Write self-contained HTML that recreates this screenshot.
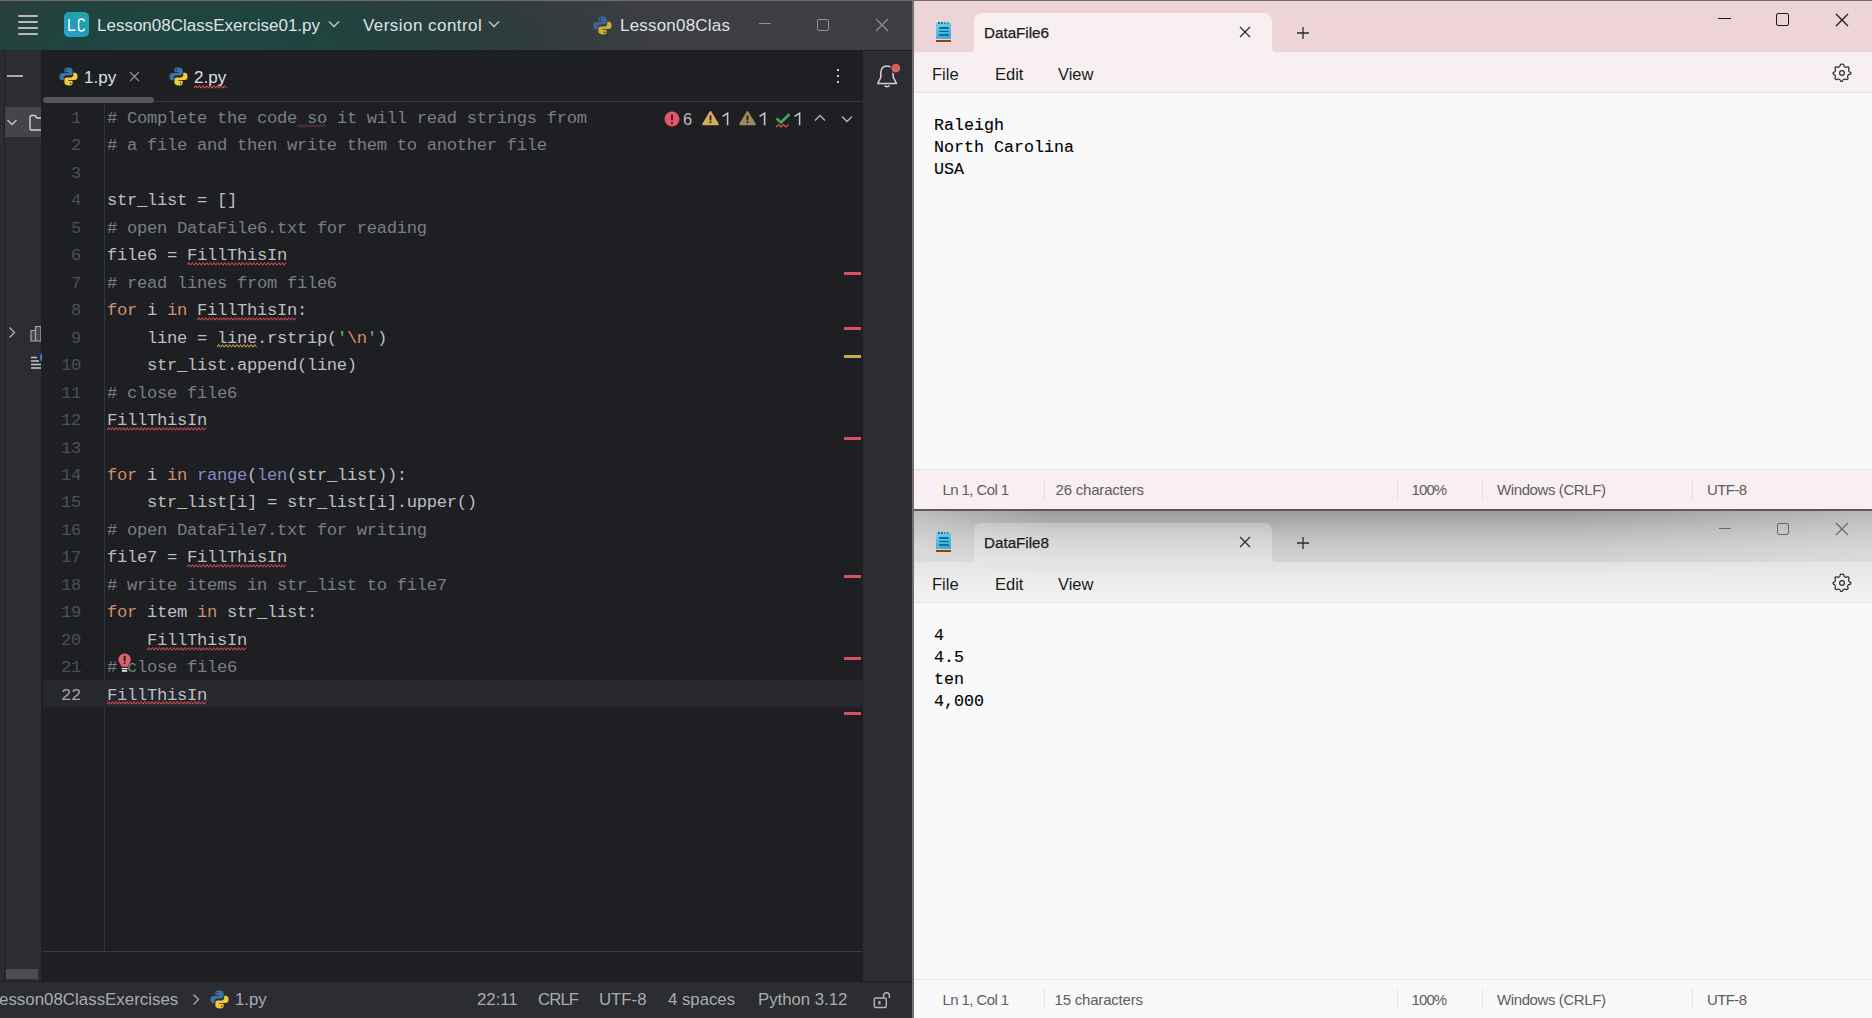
<!DOCTYPE html>
<html><head><meta charset="utf-8">
<style>
*{margin:0;padding:0;box-sizing:border-box}
html,body{width:1872px;height:1018px;overflow:hidden;background:#1e1f22;font-family:"Liberation Sans",sans-serif}
.a{position:absolute;display:block}
.t{position:absolute;white-space:pre;line-height:1}
#ide{position:absolute;left:0;top:0;width:912px;height:1018px;background:#1e1f22;overflow:hidden}
#title{position:absolute;left:0;top:0;width:912px;height:50px;background:radial-gradient(ellipse 460px 120px at 190px 45px,#1e4742 0%,#20443f 30%,#283f3e 55%,#323b3d 78%,rgba(60,62,65,0) 100%),#3c3e41}
.ln{position:absolute;left:43px;width:38px;text-align:right;color:#4b5059;font-family:"Liberation Mono",monospace;font-size:17.2px;letter-spacing:-0.320px;line-height:1;white-space:pre}
.cl{position:absolute;left:107px;color:#bcbec4;font-family:"Liberation Mono",monospace;font-size:17.2px;letter-spacing:-0.320px;white-space:pre;line-height:1}
.c{color:#7a7e85}.k{color:#cf8e6d}.s{color:#6aab73}.sx{color:#cf8e6d}.b{color:#8888c6}
.ist{color:#bcbec4;font-size:17px}
.np{position:absolute;left:914px;width:958px;overflow:hidden}
.npm{font-size:16.5px;color:#1b1b1b}
.npt{font-family:"Liberation Mono",monospace;font-size:16.67px;color:#000;line-height:22px;white-space:pre;-webkit-text-stroke:0.12px #000}
.nps{font-size:15px;color:#5d5d5d}
</style></head><body>
<div id="ide">
  <div id="title"></div>
  <div class="a" style="left:0;top:0;width:912px;height:1px;background:#6e6e6e"></div>
  <!-- hamburger -->
  <div class="a" style="left:18px;top:14.8px;width:20px;height:2px;background:#b8babe;border-radius:1px"></div>
  <div class="a" style="left:18px;top:20.8px;width:20px;height:2px;background:#b8babe;border-radius:1px"></div>
  <div class="a" style="left:18px;top:26.8px;width:20px;height:2px;background:#b8babe;border-radius:1px"></div>
  <div class="a" style="left:18px;top:32.8px;width:20px;height:2px;background:#b8babe;border-radius:1px"></div>
  <!-- LC badge -->
  <div class="a" style="left:64px;top:12px;width:25px;height:25px;border-radius:5px;background:linear-gradient(45deg,#2ca7dc 0%,#239cb4 50%,#22aa98 100%)"></div>
  <svg class="a" style="left:64px;top:12px" width="25" height="25"><path d="M5.1 7V18.2H11.5" fill="none" stroke="#fff" stroke-width="1.5"/><path d="M20.4 9.3Q20.1 7 17.4 7Q14.6 7 14.6 10V16Q14.6 19 17.4 19Q20.1 19 20.4 16.7" fill="none" stroke="#fff" stroke-width="1.5"/></svg>
  <div class="t" style="left:97px;top:16.5px;font-size:17px;color:#dfe1e5">Lesson08ClassExercise01.py</div>
  <svg class="a" style="left:328px;top:20px" width="12" height="8"><path d="M1 1.5L6 6.5L11 1.5" fill="none" stroke="#c9cbcf" stroke-width="1.3"/></svg>
  <div class="t" style="left:363px;top:16.5px;font-size:17px;letter-spacing:0.45px;color:#dfe1e5">Version control</div>
  <svg class="a" style="left:488px;top:20px" width="12" height="8"><path d="M1 1.5L6 6.5L11 1.5" fill="none" stroke="#c9cbcf" stroke-width="1.3"/></svg>
  <div class="a" style="left:0;top:0;opacity:0.8"><svg class="a" style="left:593px;top:16px" width="19" height="19" viewBox="0 0 19 19">
<path fill="#3a73a8" d="M9.2 0.6C5.6 0.6 5.4 2 5.4 3.3V5.2H9.6V6H3.3C1.6 6 0.4 7.3 0.4 9.6C0.4 12 1.5 13.2 3.1 13.2H4.8V10.9C4.8 9.5 6 8.4 7.4 8.4H11.4C12.7 8.4 13.6 7.5 13.6 6.2V3.3C13.6 1.9 12.3 0.6 9.2 0.6Z"/>
<circle cx="7.4" cy="2.8" r="0.75" fill="#1e1f22"/>
<path fill="#f0c93c" d="M9.8 18.4C13.4 18.4 13.6 17 13.6 15.7V13.8H9.4V13H15.7C17.4 13 18.6 11.7 18.6 9.4C18.6 7 17.5 5.8 15.9 5.8H14.2V8.1C14.2 9.5 13 10.6 11.6 10.6H7.6C6.3 10.6 5.4 11.5 5.4 12.8V15.7C5.4 17.1 6.7 18.4 9.8 18.4Z"/>
<circle cx="11.6" cy="16.2" r="0.75" fill="#1e1f22"/>
</svg></div>
  <div class="t" style="left:620px;top:16.5px;font-size:17px;letter-spacing:0.2px;color:#dfe1e5">Lesson08Clas</div>
  <div class="a" style="left:759px;top:23px;width:12px;height:1.2px;background:#8e9094"></div>
  <div class="a" style="left:817px;top:19px;width:12px;height:12px;border:1.2px solid #8e9094;border-radius:2px"></div>
  <svg class="a" style="left:875px;top:18px" width="14" height="14"><path d="M1 1L13 13M13 1L1 13" stroke="#8e9094" stroke-width="1.2"/></svg>

  <!-- left tool strip -->
  <div class="a" style="left:0;top:50px;width:42px;height:931px;background:#2b2d30"></div>
  <div class="a" style="left:4px;top:50px;width:1px;height:931px;background:#1e1f22"></div>
  <div class="a" style="left:41px;top:50px;width:2px;height:931px;background:#1e1f22"></div>
  <div class="a" style="left:7px;top:75px;width:16px;height:2px;background:#a8aaae"></div>
  <div class="a" style="left:5px;top:107px;width:36px;height:30px;background:#43454a"></div>
  <svg class="a" style="left:6px;top:118px" width="12" height="9"><path d="M1.5 2L6 6.5L10.5 2" fill="none" stroke="#c9cbcf" stroke-width="1.3"/></svg>
  <svg class="a" style="left:29px;top:114px" width="12" height="17"><path d="M12 4H8L6 1.5H2.5Q1 1.5 1 3V14.5Q1 16 2.5 16H12" fill="none" stroke="#d2d4d8" stroke-width="1.4"/></svg>
  <svg class="a" style="left:8px;top:326px" width="8" height="13"><path d="M1.5 1.5L6.5 6.5L1.5 11.5" fill="none" stroke="#b4b6ba" stroke-width="1.3"/></svg>
  <svg class="a" style="left:30px;top:325px" width="11" height="17"><path d="M1 5.5H5.5V16H1Z M5.5 1.5H11V16H5.5Z" fill="#45474c" stroke="#a8aaae" stroke-width="1.2"/></svg>
  <svg class="a" style="left:30px;top:353px" width="12" height="17"><path d="M1 4.5H7M1 8H9M1 11.5H11M1 15H11" stroke="#c4c6ca" stroke-width="1.4"/><path d="M12 1Q9.5 4.5 12 8" fill="#3d7cf0" stroke="#3d7cf0" stroke-width="1.5"/></svg>
  <div class="a" style="left:6px;top:969px;width:32px;height:10px;background:#4a4c50"></div>

  <!-- right strip -->
  <div class="a" style="left:863px;top:51px;width:49px;height:930px;background:#2b2d30"></div>
  <div class="a" style="left:836.5px;top:68.5px;width:2.6px;height:2.6px;background:#d9dbdf;border-radius:0.5px"></div>
  <div class="a" style="left:836.5px;top:74.7px;width:2.6px;height:2.6px;background:#d9dbdf;border-radius:0.5px"></div>
  <div class="a" style="left:836.5px;top:80.9px;width:2.6px;height:2.6px;background:#d9dbdf;border-radius:0.5px"></div>
  <svg class="a" style="left:876px;top:63px" width="24" height="26"><path d="M1.8 20.5H20.5L17.2 14.2V9.8Q17 3 11 3Q5 3 4.8 9.8V14.2Z" fill="none" stroke="#d2d4d8" stroke-width="1.5" stroke-linejoin="round"/><path d="M8.5 22.5Q11 25 13.5 22.5" fill="none" stroke="#d2d4d8" stroke-width="1.5"/><circle cx="19.8" cy="5.1" r="5.6" fill="#2b2d30"/><circle cx="19.8" cy="5.1" r="4.4" fill="#db5c5c"/></svg>

  <!-- tab row -->
  <svg class="a" style="left:59px;top:67px" width="19" height="19" viewBox="0 0 19 19">
<path fill="#3a73a8" d="M9.2 0.6C5.6 0.6 5.4 2 5.4 3.3V5.2H9.6V6H3.3C1.6 6 0.4 7.3 0.4 9.6C0.4 12 1.5 13.2 3.1 13.2H4.8V10.9C4.8 9.5 6 8.4 7.4 8.4H11.4C12.7 8.4 13.6 7.5 13.6 6.2V3.3C13.6 1.9 12.3 0.6 9.2 0.6Z"/>
<circle cx="7.4" cy="2.8" r="0.75" fill="#1e1f22"/>
<path fill="#f0c93c" d="M9.8 18.4C13.4 18.4 13.6 17 13.6 15.7V13.8H9.4V13H15.7C17.4 13 18.6 11.7 18.6 9.4C18.6 7 17.5 5.8 15.9 5.8H14.2V8.1C14.2 9.5 13 10.6 11.6 10.6H7.6C6.3 10.6 5.4 11.5 5.4 12.8V15.7C5.4 17.1 6.7 18.4 9.8 18.4Z"/>
<circle cx="11.6" cy="16.2" r="0.75" fill="#1e1f22"/>
</svg>
  <div class="t" style="left:84px;top:69px;font-size:17px;color:#dfe1e5">1.py</div>
  <svg class="a" style="left:129px;top:71px" width="11" height="11"><path d="M1 1L10 10M10 1L1 10" stroke="#8c8f94" stroke-width="1.2"/></svg>
  <svg class="a" style="left:169px;top:67px" width="19" height="19" viewBox="0 0 19 19">
<path fill="#3a73a8" d="M9.2 0.6C5.6 0.6 5.4 2 5.4 3.3V5.2H9.6V6H3.3C1.6 6 0.4 7.3 0.4 9.6C0.4 12 1.5 13.2 3.1 13.2H4.8V10.9C4.8 9.5 6 8.4 7.4 8.4H11.4C12.7 8.4 13.6 7.5 13.6 6.2V3.3C13.6 1.9 12.3 0.6 9.2 0.6Z"/>
<circle cx="7.4" cy="2.8" r="0.75" fill="#1e1f22"/>
<path fill="#f0c93c" d="M9.8 18.4C13.4 18.4 13.6 17 13.6 15.7V13.8H9.4V13H15.7C17.4 13 18.6 11.7 18.6 9.4C18.6 7 17.5 5.8 15.9 5.8H14.2V8.1C14.2 9.5 13 10.6 11.6 10.6H7.6C6.3 10.6 5.4 11.5 5.4 12.8V15.7C5.4 17.1 6.7 18.4 9.8 18.4Z"/>
<circle cx="11.6" cy="16.2" r="0.75" fill="#1e1f22"/>
</svg>
  <div class="t" style="left:194px;top:69px;font-size:17px;color:#dfe1e5">2.py</div>
  <svg class="a" style="left:194px;top:85px" width="33" height="4"><path d="M0 3.2 L1.80 0.60 L3.60 3.20 L5.40 0.60 L7.20 3.20 L9.00 0.60 L10.80 3.20 L12.60 0.60 L14.40 3.20 L16.20 0.60 L18.00 3.20 L19.80 0.60 L21.60 3.20 L23.40 0.60 L25.20 3.20 L27.00 0.60 L28.80 3.20 L30.60 0.60 L32.40 3.20" fill="none" stroke="#f75464" stroke-width="1"/></svg>
  <div class="a" style="left:43px;top:97px;width:111px;height:6px;background:#55575c;border-radius:3px"></div>
  <div class="a" style="left:154px;top:101px;width:708px;height:1px;background:#393b40"></div>

  <!-- gutter separator & bottom line -->
  <div class="a" style="left:104px;top:102px;width:1px;height:849px;background:#313438"></div>
  <div class="a" style="left:43px;top:951px;width:819px;height:1px;background:#393b40"></div>
  <!-- current line -->
  <div class="a" style="left:43px;top:680px;width:819px;height:27px;background:#26282e"></div>

<div class="ln" style="top:109.82px;color:#4b5059">1</div>
<div class="cl" style="top:109.82px"><span class="c"># Complete the code </span><span class="c">so</span><span class="c"> it will read strings from</span></div>
<svg class="a" style="left:297.0px;top:124px" width="30" height="4"><path d="M0 3.2 L1.80 0.60 L3.60 3.20 L5.40 0.60 L7.20 3.20 L9.00 0.60 L10.80 3.20 L12.60 0.60 L14.40 3.20 L16.20 0.60 L18.00 3.20 L19.80 0.60 L21.60 3.20 L23.40 0.60 L25.20 3.20 L27.00 0.60 L28.80 3.20" fill="none" stroke="#6e3a42" stroke-width="1"/></svg>
<div class="ln" style="top:137.30px;color:#4b5059">2</div>
<div class="cl" style="top:137.30px"><span class="c"># a file and then write them to another file</span></div>
<div class="ln" style="top:164.78px;color:#4b5059">3</div>
<div class="cl" style="top:164.78px"></div>
<div class="ln" style="top:192.25px;color:#4b5059">4</div>
<div class="cl" style="top:192.25px">str_list = []</div>
<div class="ln" style="top:219.73px;color:#4b5059">5</div>
<div class="cl" style="top:219.73px"><span class="c"># open DataFile6.txt for reading</span></div>
<div class="ln" style="top:247.20px;color:#4b5059">6</div>
<div class="cl" style="top:247.20px">file6 = FillThisIn</div>
<svg class="a" style="left:187.0px;top:262px" width="100" height="4"><path d="M0 3.2 L1.80 0.60 L3.60 3.20 L5.40 0.60 L7.20 3.20 L9.00 0.60 L10.80 3.20 L12.60 0.60 L14.40 3.20 L16.20 0.60 L18.00 3.20 L19.80 0.60 L21.60 3.20 L23.40 0.60 L25.20 3.20 L27.00 0.60 L28.80 3.20 L30.60 0.60 L32.40 3.20 L34.20 0.60 L36.00 3.20 L37.80 0.60 L39.60 3.20 L41.40 0.60 L43.20 3.20 L45.00 0.60 L46.80 3.20 L48.60 0.60 L50.40 3.20 L52.20 0.60 L54.00 3.20 L55.80 0.60 L57.60 3.20 L59.40 0.60 L61.20 3.20 L63.00 0.60 L64.80 3.20 L66.60 0.60 L68.40 3.20 L70.20 0.60 L72.00 3.20 L73.80 0.60 L75.60 3.20 L77.40 0.60 L79.20 3.20 L81.00 0.60 L82.80 3.20 L84.60 0.60 L86.40 3.20 L88.20 0.60 L90.00 3.20 L91.80 0.60 L93.60 3.20 L95.40 0.60 L97.20 3.20 L99.00 0.60" fill="none" stroke="#e0505e" stroke-width="1"/></svg>
<div class="ln" style="top:274.68px;color:#4b5059">7</div>
<div class="cl" style="top:274.68px"><span class="c"># read lines from file6</span></div>
<div class="ln" style="top:302.16px;color:#4b5059">8</div>
<div class="cl" style="top:302.16px"><span class="k">for</span> i <span class="k">in</span> FillThisIn:</div>
<svg class="a" style="left:197.0px;top:317px" width="100" height="4"><path d="M0 3.2 L1.80 0.60 L3.60 3.20 L5.40 0.60 L7.20 3.20 L9.00 0.60 L10.80 3.20 L12.60 0.60 L14.40 3.20 L16.20 0.60 L18.00 3.20 L19.80 0.60 L21.60 3.20 L23.40 0.60 L25.20 3.20 L27.00 0.60 L28.80 3.20 L30.60 0.60 L32.40 3.20 L34.20 0.60 L36.00 3.20 L37.80 0.60 L39.60 3.20 L41.40 0.60 L43.20 3.20 L45.00 0.60 L46.80 3.20 L48.60 0.60 L50.40 3.20 L52.20 0.60 L54.00 3.20 L55.80 0.60 L57.60 3.20 L59.40 0.60 L61.20 3.20 L63.00 0.60 L64.80 3.20 L66.60 0.60 L68.40 3.20 L70.20 0.60 L72.00 3.20 L73.80 0.60 L75.60 3.20 L77.40 0.60 L79.20 3.20 L81.00 0.60 L82.80 3.20 L84.60 0.60 L86.40 3.20 L88.20 0.60 L90.00 3.20 L91.80 0.60 L93.60 3.20 L95.40 0.60 L97.20 3.20 L99.00 0.60" fill="none" stroke="#e0505e" stroke-width="1"/></svg>
<div class="ln" style="top:329.63px;color:#4b5059">9</div>
<div class="cl" style="top:329.63px">    line = line.rstrip(<span class="s">'</span><span class="sx">\n</span><span class="s">'</span>)</div>
<svg class="a" style="left:217.0px;top:344px" width="40" height="4"><path d="M0 3.2 L1.80 0.60 L3.60 3.20 L5.40 0.60 L7.20 3.20 L9.00 0.60 L10.80 3.20 L12.60 0.60 L14.40 3.20 L16.20 0.60 L18.00 3.20 L19.80 0.60 L21.60 3.20 L23.40 0.60 L25.20 3.20 L27.00 0.60 L28.80 3.20 L30.60 0.60 L32.40 3.20 L34.20 0.60 L36.00 3.20 L37.80 0.60 L39.60 3.20" fill="none" stroke="#d5b64a" stroke-width="1"/></svg>
<div class="ln" style="top:357.11px;color:#4b5059">10</div>
<div class="cl" style="top:357.11px">    str_list.append(line)</div>
<div class="ln" style="top:384.58px;color:#4b5059">11</div>
<div class="cl" style="top:384.58px"><span class="c"># close file6</span></div>
<div class="ln" style="top:412.06px;color:#4b5059">12</div>
<div class="cl" style="top:412.06px">FillThisIn</div>
<svg class="a" style="left:107.0px;top:427px" width="100" height="4"><path d="M0 3.2 L1.80 0.60 L3.60 3.20 L5.40 0.60 L7.20 3.20 L9.00 0.60 L10.80 3.20 L12.60 0.60 L14.40 3.20 L16.20 0.60 L18.00 3.20 L19.80 0.60 L21.60 3.20 L23.40 0.60 L25.20 3.20 L27.00 0.60 L28.80 3.20 L30.60 0.60 L32.40 3.20 L34.20 0.60 L36.00 3.20 L37.80 0.60 L39.60 3.20 L41.40 0.60 L43.20 3.20 L45.00 0.60 L46.80 3.20 L48.60 0.60 L50.40 3.20 L52.20 0.60 L54.00 3.20 L55.80 0.60 L57.60 3.20 L59.40 0.60 L61.20 3.20 L63.00 0.60 L64.80 3.20 L66.60 0.60 L68.40 3.20 L70.20 0.60 L72.00 3.20 L73.80 0.60 L75.60 3.20 L77.40 0.60 L79.20 3.20 L81.00 0.60 L82.80 3.20 L84.60 0.60 L86.40 3.20 L88.20 0.60 L90.00 3.20 L91.80 0.60 L93.60 3.20 L95.40 0.60 L97.20 3.20 L99.00 0.60" fill="none" stroke="#e0505e" stroke-width="1"/></svg>
<div class="ln" style="top:439.54px;color:#4b5059">13</div>
<div class="cl" style="top:439.54px"></div>
<div class="ln" style="top:467.01px;color:#4b5059">14</div>
<div class="cl" style="top:467.01px"><span class="k">for</span> i <span class="k">in</span> <span class="b">range</span>(<span class="b">len</span>(str_list)):</div>
<div class="ln" style="top:494.49px;color:#4b5059">15</div>
<div class="cl" style="top:494.49px">    str_list[i] = str_list[i].upper()</div>
<div class="ln" style="top:521.96px;color:#4b5059">16</div>
<div class="cl" style="top:521.96px"><span class="c"># open DataFile7.txt for writing</span></div>
<div class="ln" style="top:549.44px;color:#4b5059">17</div>
<div class="cl" style="top:549.44px">file7 = FillThisIn</div>
<svg class="a" style="left:187.0px;top:564px" width="100" height="4"><path d="M0 3.2 L1.80 0.60 L3.60 3.20 L5.40 0.60 L7.20 3.20 L9.00 0.60 L10.80 3.20 L12.60 0.60 L14.40 3.20 L16.20 0.60 L18.00 3.20 L19.80 0.60 L21.60 3.20 L23.40 0.60 L25.20 3.20 L27.00 0.60 L28.80 3.20 L30.60 0.60 L32.40 3.20 L34.20 0.60 L36.00 3.20 L37.80 0.60 L39.60 3.20 L41.40 0.60 L43.20 3.20 L45.00 0.60 L46.80 3.20 L48.60 0.60 L50.40 3.20 L52.20 0.60 L54.00 3.20 L55.80 0.60 L57.60 3.20 L59.40 0.60 L61.20 3.20 L63.00 0.60 L64.80 3.20 L66.60 0.60 L68.40 3.20 L70.20 0.60 L72.00 3.20 L73.80 0.60 L75.60 3.20 L77.40 0.60 L79.20 3.20 L81.00 0.60 L82.80 3.20 L84.60 0.60 L86.40 3.20 L88.20 0.60 L90.00 3.20 L91.80 0.60 L93.60 3.20 L95.40 0.60 L97.20 3.20 L99.00 0.60" fill="none" stroke="#e0505e" stroke-width="1"/></svg>
<div class="ln" style="top:576.92px;color:#4b5059">18</div>
<div class="cl" style="top:576.92px"><span class="c"># write items in str_list to file7</span></div>
<div class="ln" style="top:604.39px;color:#4b5059">19</div>
<div class="cl" style="top:604.39px"><span class="k">for</span> item <span class="k">in</span> str_list:</div>
<div class="ln" style="top:631.87px;color:#4b5059">20</div>
<div class="cl" style="top:631.87px">    FillThisIn</div>
<svg class="a" style="left:147.0px;top:647px" width="100" height="4"><path d="M0 3.2 L1.80 0.60 L3.60 3.20 L5.40 0.60 L7.20 3.20 L9.00 0.60 L10.80 3.20 L12.60 0.60 L14.40 3.20 L16.20 0.60 L18.00 3.20 L19.80 0.60 L21.60 3.20 L23.40 0.60 L25.20 3.20 L27.00 0.60 L28.80 3.20 L30.60 0.60 L32.40 3.20 L34.20 0.60 L36.00 3.20 L37.80 0.60 L39.60 3.20 L41.40 0.60 L43.20 3.20 L45.00 0.60 L46.80 3.20 L48.60 0.60 L50.40 3.20 L52.20 0.60 L54.00 3.20 L55.80 0.60 L57.60 3.20 L59.40 0.60 L61.20 3.20 L63.00 0.60 L64.80 3.20 L66.60 0.60 L68.40 3.20 L70.20 0.60 L72.00 3.20 L73.80 0.60 L75.60 3.20 L77.40 0.60 L79.20 3.20 L81.00 0.60 L82.80 3.20 L84.60 0.60 L86.40 3.20 L88.20 0.60 L90.00 3.20 L91.80 0.60 L93.60 3.20 L95.40 0.60 L97.20 3.20 L99.00 0.60" fill="none" stroke="#e0505e" stroke-width="1"/></svg>
<div class="ln" style="top:659.34px;color:#4b5059">21</div>
<div class="cl" style="top:659.34px"><span class="c"># close file6</span></div>
<div class="ln" style="top:686.82px;color:#a1a3ab">22</div>
<div class="cl" style="top:686.82px">FillThisIn</div>
<svg class="a" style="left:107.0px;top:701px" width="100" height="4"><path d="M0 3.2 L1.80 0.60 L3.60 3.20 L5.40 0.60 L7.20 3.20 L9.00 0.60 L10.80 3.20 L12.60 0.60 L14.40 3.20 L16.20 0.60 L18.00 3.20 L19.80 0.60 L21.60 3.20 L23.40 0.60 L25.20 3.20 L27.00 0.60 L28.80 3.20 L30.60 0.60 L32.40 3.20 L34.20 0.60 L36.00 3.20 L37.80 0.60 L39.60 3.20 L41.40 0.60 L43.20 3.20 L45.00 0.60 L46.80 3.20 L48.60 0.60 L50.40 3.20 L52.20 0.60 L54.00 3.20 L55.80 0.60 L57.60 3.20 L59.40 0.60 L61.20 3.20 L63.00 0.60 L64.80 3.20 L66.60 0.60 L68.40 3.20 L70.20 0.60 L72.00 3.20 L73.80 0.60 L75.60 3.20 L77.40 0.60 L79.20 3.20 L81.00 0.60 L82.80 3.20 L84.60 0.60 L86.40 3.20 L88.20 0.60 L90.00 3.20 L91.80 0.60 L93.60 3.20 L95.40 0.60 L97.20 3.20 L99.00 0.60" fill="none" stroke="#e0505e" stroke-width="1"/></svg>

  <!-- bulb icon on line 21 -->
  <svg class="a" style="left:118px;top:653px" width="14" height="20"><path d="M6.6 0.5A6.1 6.1 0 0 1 11.2 10.6L9.6 13.8H3.6L2 10.6A6.1 6.1 0 0 1 6.6 0.5Z" fill="#e5606a"/><rect x="5.7" y="2.8" width="1.9" height="5.6" rx="0.6" fill="#1e1f22"/><circle cx="6.65" cy="10.3" r="1.05" fill="#1e1f22"/><rect x="3.6" y="14.9" width="6" height="1.3" fill="#e6e7ea"/><rect x="4" y="16.9" width="5.2" height="2" fill="#cfd1d5"/></svg>

  <!-- inspection widget -->
  <svg class="a" style="left:664px;top:111px" width="16" height="16"><circle cx="8" cy="8" r="7.5" fill="#e55765"/><rect x="7" y="3.5" width="2" height="6" rx="1" fill="#1e1f22"/><circle cx="8" cy="12" r="1.1" fill="#1e1f22"/></svg>
  <div class="t ist" style="left:683px;top:110.5px;font-size:16.5px">6</div>
  <svg class="a" style="left:702px;top:110px" width="17" height="16"><path d="M8.5 2L15.8 14.2H1.2Z" fill="#d6ae58" stroke="#d6ae58" stroke-width="2" stroke-linejoin="round"/><rect x="7.6" y="5.5" width="1.8" height="5" fill="#1e1f22"/><circle cx="8.5" cy="12.2" r="1" fill="#1e1f22"/></svg>
  <svg class="a" style="left:722px;top:112px" width="8" height="14"><path d="M0.6 4.3L5.6 1.2V13.2" fill="none" stroke="#c9cbcf" stroke-width="1.5" stroke-linejoin="miter"/></svg>
  <svg class="a" style="left:739px;top:110px" width="17" height="16"><path d="M8.5 2L15.8 14.2H1.2Z" fill="#9e8a5c" stroke="#9e8a5c" stroke-width="2" stroke-linejoin="round"/><rect x="7.6" y="5.5" width="1.8" height="5" fill="#1e1f22"/><circle cx="8.5" cy="12.2" r="1" fill="#1e1f22"/></svg>
  <svg class="a" style="left:758.5px;top:112px" width="8" height="14"><path d="M0.6 4.3L5.6 1.2V13.2" fill="none" stroke="#c9cbcf" stroke-width="1.5" stroke-linejoin="miter"/></svg>
  <svg class="a" style="left:775px;top:112px" width="16" height="16"><path d="M1.5 6.5L6 10.5L14.5 2" fill="none" stroke="#4da55d" stroke-width="2.6"/><path d="M1 15L3.5 12.5L6 15L8.5 12.5L11 15L13.5 12.5" fill="none" stroke="#e0575f" stroke-width="1.1"/></svg>
  <svg class="a" style="left:794px;top:112px" width="8" height="14"><path d="M0.6 4.3L5.6 1.2V13.2" fill="none" stroke="#c9cbcf" stroke-width="1.5" stroke-linejoin="miter"/></svg>
  <svg class="a" style="left:814px;top:114px" width="12" height="8"><path d="M1 6.5L6 1.5L11 6.5" fill="none" stroke="#b4b6ba" stroke-width="1.3"/></svg>
  <svg class="a" style="left:841px;top:115px" width="12" height="8"><path d="M1 1.5L6 6.5L11 1.5" fill="none" stroke="#b4b6ba" stroke-width="1.3"/></svg>

  <!-- error stripe marks -->
  <div class="a" style="left:844px;top:272px;width:17px;height:3px;background:#d9505e"></div>
  <div class="a" style="left:844px;top:327px;width:17px;height:3px;background:#d9505e"></div>
  <div class="a" style="left:844px;top:355px;width:17px;height:3px;background:#c9a74a"></div>
  <div class="a" style="left:844px;top:437px;width:17px;height:3px;background:#d9505e"></div>
  <div class="a" style="left:844px;top:575px;width:17px;height:3px;background:#d9505e"></div>
  <div class="a" style="left:844px;top:657px;width:17px;height:3px;background:#d9505e"></div>
  <div class="a" style="left:844px;top:712px;width:17px;height:3px;background:#d9505e"></div>

  <!-- status bar -->
  <div class="a" style="left:0;top:981px;width:912px;height:37px;background:#2b2d30;border-top:1px solid #1e1f22"></div>
  <div class="t" style="left:-1px;top:992px;font-size:16.9px;color:#a9acb2">esson08ClassExercises</div>
  <svg class="a" style="left:192px;top:993px" width="8" height="13"><path d="M1.5 1.5L6.5 6.5L1.5 11.5" fill="none" stroke="#a9acb2" stroke-width="1.3"/></svg>
  <svg class="a" style="left:210px;top:990px" width="19" height="19" viewBox="0 0 19 19">
<path fill="#3a73a8" d="M9.2 0.6C5.6 0.6 5.4 2 5.4 3.3V5.2H9.6V6H3.3C1.6 6 0.4 7.3 0.4 9.6C0.4 12 1.5 13.2 3.1 13.2H4.8V10.9C4.8 9.5 6 8.4 7.4 8.4H11.4C12.7 8.4 13.6 7.5 13.6 6.2V3.3C13.6 1.9 12.3 0.6 9.2 0.6Z"/>
<circle cx="7.4" cy="2.8" r="0.75" fill="#1e1f22"/>
<path fill="#f0c93c" d="M9.8 18.4C13.4 18.4 13.6 17 13.6 15.7V13.8H9.4V13H15.7C17.4 13 18.6 11.7 18.6 9.4C18.6 7 17.5 5.8 15.9 5.8H14.2V8.1C14.2 9.5 13 10.6 11.6 10.6H7.6C6.3 10.6 5.4 11.5 5.4 12.8V15.7C5.4 17.1 6.7 18.4 9.8 18.4Z"/>
<circle cx="11.6" cy="16.2" r="0.75" fill="#1e1f22"/>
</svg>
  <div class="t" style="left:235px;top:992px;font-size:16.75px;color:#a9acb2">1.py</div>
  <div class="t" style="left:477px;top:992px;font-size:16.75px;color:#a9acb2">22:11</div>
  <div class="t" style="left:538px;top:992px;font-size:16.75px;letter-spacing:-0.9px;color:#a9acb2">CRLF</div>
  <div class="t" style="left:599px;top:992px;font-size:16.75px;color:#a9acb2">UTF-8</div>
  <div class="t" style="left:668px;top:992px;font-size:16.75px;color:#a9acb2">4 spaces</div>
  <div class="t" style="left:758px;top:992px;font-size:16.75px;color:#a9acb2">Python 3.12</div>
  <svg class="a" style="left:872px;top:990px" width="20" height="20"><rect x="2.3" y="8" width="12" height="9.5" rx="1.5" fill="none" stroke="#b4b6ba" stroke-width="1.4"/><rect x="6.5" y="11" width="2" height="3.5" fill="#b4b6ba"/><path d="M11.6 7.8V5.6Q11.6 2.8 14.5 2.8Q17.4 2.8 17.4 5.6V8.2" fill="none" stroke="#b4b6ba" stroke-width="1.4"/></svg>
</div>
<div class="a" style="left:912px;top:0;width:2px;height:1018px;background:#707070"></div>
<div class="a" style="left:912px;top:0;width:960px;height:1px;background:#6e6e6e"></div>

<!-- Notepad 1 -->
<div class="np" style="top:1px;height:508px;background:#f9f9f9">
  <div class="a" style="left:0;top:0;width:958px;height:92px;background:#f8eff1"></div>
  <div class="a" style="left:0;top:0;width:60px;height:51px;background:#ecd4d9;border-radius:0 0 4px 0"></div>
  <div class="a" style="left:358px;top:0;width:600px;height:51px;background:#ecd4d9;border-radius:0 0 0 4px"></div>
  <div class="a" style="left:55px;top:0;width:308px;height:24px;background:#ecd4d9"></div>
  <div class="a" style="left:60px;top:12px;width:298px;height:44px;background:#f8eff1;border-radius:8px 8px 0 0"></div>
  <div class="a" style="left:0;top:91px;width:958px;height:1px;background:#e6e1e3"></div>
  <svg class="a" style="left:22px;top:20px" width="16" height="22" viewBox="0 0 16 22">
<defs><linearGradient id="npg20" x1="0" y1="0" x2="0.3" y2="1"><stop offset="0" stop-color="#74d3ee"/><stop offset="1" stop-color="#3aaed9"/></linearGradient></defs>
<rect x="0" y="1.9" width="15" height="16" fill="url(#npg20)"/>
<rect x="2" y="0.9" width="1.8" height="2" fill="#05668f"/><rect x="5" y="0.9" width="1.8" height="2" fill="#05668f"/><rect x="8.3" y="0.9" width="1.1" height="2" fill="#05668f"/><rect x="11.2" y="0.9" width="1.1" height="2" fill="#05668f"/>
<rect x="3.2" y="6.1" width="9.5" height="1.8" fill="#05668f"/><rect x="3.2" y="9.9" width="9.5" height="1.1" fill="#05668f"/><rect x="3.2" y="13" width="9.5" height="1.8" fill="#05668f"/>
<rect x="0" y="19" width="15" height="2" fill="#973f06"/>
</svg>
  <div class="t" style="left:70px;top:23.5px;font-size:15.2px;-webkit-text-stroke:0.25px #1b1b1b;color:#1b1b1b">DataFile6</div>
  <svg class="a" style="left:325px;top:25px" width="12" height="12"><path d="M1 1L11 11M11 1L1 11" stroke="#2b2b2b" stroke-width="1.2"/></svg>
  <svg class="a" style="left:382px;top:25px" width="14" height="14"><path d="M7 1V13M1 7H13" stroke="#2b2b2b" stroke-width="1.3"/></svg>
  <div class="a" style="left:804px;top:17px;width:13px;height:1.4px;background:#1b1b1b"></div>
  <div class="a" style="left:862px;top:12px;width:13px;height:13px;border:1.4px solid #1b1b1b;border-radius:2px"></div>
  <svg class="a" style="left:921px;top:12px" width="14" height="14"><path d="M1 1L13 13M13 1L1 13" stroke="#1b1b1b" stroke-width="1.3"/></svg>
  <div class="t npm" style="left:18px;top:65px">File</div>
  <div class="t npm" style="left:81px;top:65px">Edit</div>
  <div class="t npm" style="left:144px;top:65px">View</div>
  <svg class="a" style="left:918px;top:62px" width="20" height="20" viewBox="0 0 20 20"><path d="M10 1.8L11.6 2.1L12.2 4.3L13.9 5.3L16.1 4.6L17.3 5.9L16.6 8.1L17.5 9.9L19.1 10.5L18.8 12.1L16.6 12.7L15.6 14.4L16.3 16.6L15 17.8L12.8 17.1L11 18L10.4 19.6H8.6L8 18L6.2 17.1L4 17.8L2.7 16.6L3.4 14.4L2.4 12.7L0.9 12.1V10.5L2.5 9.9L3.4 8.1L2.7 5.9L3.9 4.6L6.1 5.3L7.8 4.3L8.4 2.1Z" transform="translate(0.2,-0.8) scale(0.98)" fill="none" stroke="#2b2b2b" stroke-width="1.2" stroke-linejoin="round"/><circle cx="10" cy="10" r="2.4" fill="none" stroke="#2b2b2b" stroke-width="1.2"/></svg>
  <div class="t npt" style="left:20px;top:114px">Raleigh
North Carolina
USA</div>
  <div class="a" style="left:0;top:468px;width:958px;height:1px;background:#e5e0e2"></div>
  <div class="a" style="left:0;top:469px;width:958px;height:40px;background:#f9eff2"></div>
  <div class="t nps" style="left:28.5px;top:481px;letter-spacing:-0.6px">Ln 1, Col 1</div>
  <div class="a" style="left:130px;top:478px;width:1px;height:20px;background:#e3dcdf"></div>
  <div class="t nps" style="left:141.5px;top:481px;letter-spacing:-0.2px">26 characters</div>
  <div class="a" style="left:483px;top:478px;width:1px;height:20px;background:#e3dcdf"></div>
  <div class="t nps" style="left:497.5px;top:481px;letter-spacing:-0.9px">100%</div>
  <div class="a" style="left:568px;top:478px;width:1px;height:20px;background:#e3dcdf"></div>
  <div class="t nps" style="left:583px;top:481px;letter-spacing:-0.4px">Windows (CRLF)</div>
  <div class="a" style="left:778px;top:478px;width:1px;height:20px;background:#e3dcdf"></div>
  <div class="t nps" style="left:793px;top:481px;letter-spacing:-0.6px">UTF-8</div>
</div>
<div class="a" style="left:914px;top:509px;width:958px;height:2px;background:#5a5a5a"></div>

<!-- Notepad 2 -->
<div class="np" style="top:511px;height:507px;background:#f9f9f9">
  <div class="a" style="left:0;top:0;width:958px;height:92px;background:linear-gradient(180deg,#c0c0c0 0%,#d2d2d2 30%,#e2e2e2 55%,#ececec 75%,#f3f3f3 100%)"></div>
  <div class="a" style="left:0;top:0;width:60px;height:51px;background:linear-gradient(180deg,#9c9c9c 0%,#b6b6b6 35%,#cacaca 70%,#d3d3d3 100%);border-radius:0 0 4px 0"></div>
  <div class="a" style="left:358px;top:0;width:600px;height:51px;background:linear-gradient(180deg,#9c9c9c 0%,#b6b6b6 35%,#cacaca 70%,#d3d3d3 100%);border-radius:0 0 0 4px"></div>
  <div class="a" style="left:55px;top:0;width:308px;height:24px;background:linear-gradient(180deg,#9c9c9c 0%,#b6b6b6 83%,#bdbdbd 100%)"></div>
  <div class="a" style="left:60px;top:12px;width:298px;height:44px;background:linear-gradient(180deg,#c2c2c2 0%,#d6d6d6 40%,#e4e4e4 90%);border-radius:8px 8px 0 0"></div>
  <div class="a" style="left:0;top:0;width:958px;height:60px;background:linear-gradient(90deg,rgba(235,235,235,0.4) 0%,rgba(235,235,235,0) 14%,rgba(235,235,235,0) 68%,rgba(235,235,235,0.35) 100%)"></div>
  <div class="a" style="left:0;top:91px;width:958px;height:1px;background:#e5e5e5"></div>
  <svg class="a" style="left:22px;top:20px" width="16" height="22" viewBox="0 0 16 22">
<defs><linearGradient id="npg20" x1="0" y1="0" x2="0.3" y2="1"><stop offset="0" stop-color="#74d3ee"/><stop offset="1" stop-color="#3aaed9"/></linearGradient></defs>
<rect x="0" y="1.9" width="15" height="16" fill="url(#npg20)"/>
<rect x="2" y="0.9" width="1.8" height="2" fill="#05668f"/><rect x="5" y="0.9" width="1.8" height="2" fill="#05668f"/><rect x="8.3" y="0.9" width="1.1" height="2" fill="#05668f"/><rect x="11.2" y="0.9" width="1.1" height="2" fill="#05668f"/>
<rect x="3.2" y="6.1" width="9.5" height="1.8" fill="#05668f"/><rect x="3.2" y="9.9" width="9.5" height="1.1" fill="#05668f"/><rect x="3.2" y="13" width="9.5" height="1.8" fill="#05668f"/>
<rect x="0" y="19" width="15" height="2" fill="#973f06"/>
</svg>
  <div class="t" style="left:70px;top:23.5px;font-size:15.2px;-webkit-text-stroke:0.25px #1b1b1b;color:#1b1b1b">DataFile8</div>
  <svg class="a" style="left:325px;top:25px" width="12" height="12"><path d="M1 1L11 11M11 1L1 11" stroke="#2b2b2b" stroke-width="1.2"/></svg>
  <svg class="a" style="left:382px;top:25px" width="14" height="14"><path d="M7 1V13M1 7H13" stroke="#2b2b2b" stroke-width="1.3"/></svg>
  <div class="a" style="left:805px;top:17px;width:12px;height:1px;background:#666"></div>
  <div class="a" style="left:863px;top:12px;width:12px;height:12px;border:1px solid #666;border-radius:2px"></div>
  <svg class="a" style="left:921px;top:11px" width="14" height="14"><path d="M1 1L13 13M13 1L1 13" stroke="#666" stroke-width="1.1"/></svg>
  <div class="t npm" style="left:18px;top:65px">File</div>
  <div class="t npm" style="left:81px;top:65px">Edit</div>
  <div class="t npm" style="left:144px;top:65px">View</div>
  <svg class="a" style="left:918px;top:62px" width="20" height="20" viewBox="0 0 20 20"><path d="M10 1.8L11.6 2.1L12.2 4.3L13.9 5.3L16.1 4.6L17.3 5.9L16.6 8.1L17.5 9.9L19.1 10.5L18.8 12.1L16.6 12.7L15.6 14.4L16.3 16.6L15 17.8L12.8 17.1L11 18L10.4 19.6H8.6L8 18L6.2 17.1L4 17.8L2.7 16.6L3.4 14.4L2.4 12.7L0.9 12.1V10.5L2.5 9.9L3.4 8.1L2.7 5.9L3.9 4.6L6.1 5.3L7.8 4.3L8.4 2.1Z" transform="translate(0.2,-0.8) scale(0.98)" fill="none" stroke="#2b2b2b" stroke-width="1.2" stroke-linejoin="round"/><circle cx="10" cy="10" r="2.4" fill="none" stroke="#2b2b2b" stroke-width="1.2"/></svg>
  <div class="t npt" style="left:20px;top:114px">4
4.5
ten
4,000</div>
  <div class="a" style="left:0;top:468px;width:958px;height:1px;background:#e5e5e5"></div>
  <div class="t nps" style="left:28.5px;top:481px;letter-spacing:-0.6px">Ln 1, Col 1</div>
  <div class="a" style="left:130px;top:478px;width:1px;height:20px;background:#e5e5e5"></div>
  <div class="t nps" style="left:140.5px;top:481px;letter-spacing:-0.2px">15 characters</div>
  <div class="a" style="left:483px;top:478px;width:1px;height:20px;background:#e5e5e5"></div>
  <div class="t nps" style="left:497.5px;top:481px;letter-spacing:-0.9px">100%</div>
  <div class="a" style="left:568px;top:478px;width:1px;height:20px;background:#e5e5e5"></div>
  <div class="t nps" style="left:583px;top:481px;letter-spacing:-0.4px">Windows (CRLF)</div>
  <div class="a" style="left:778px;top:478px;width:1px;height:20px;background:#e5e5e5"></div>
  <div class="t nps" style="left:793px;top:481px;letter-spacing:-0.6px">UTF-8</div>
</div>
</body></html>
